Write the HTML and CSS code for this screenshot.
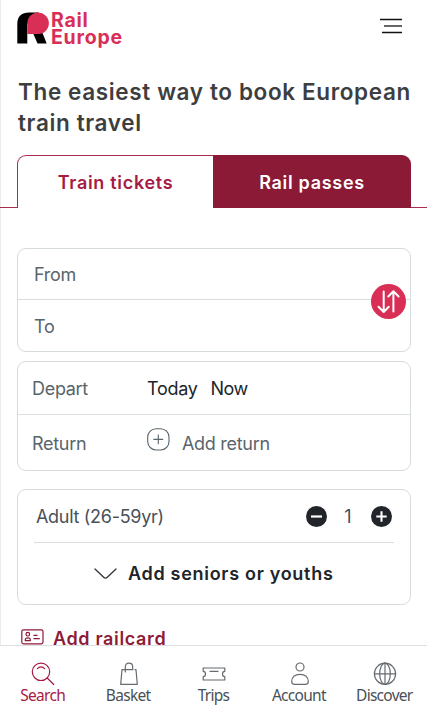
FILE: index.html
```html
<!DOCTYPE html>
<html lang="en">
<head>
<meta charset="utf-8">
<meta name="viewport" content="width=device-width, initial-scale=1">
<title>Rail Europe</title>
<link rel="stylesheet" href="styles.css">
</head>
<body>
<div class="app">
  <main class="page">
    <header class="header">
      <div class="brand">
        <svg width="33" height="32" viewBox="0 0 33 32"><path d="M.3 31.500V12C.3 4 5 .5 12 .5H22L10.300 12V31.500Z" fill="#000"/><path d="M16 21H25.500L29.700 31.500H20.500Z" fill="#000"/><path d="M10.300 22V11.500A10.800 10.800 0 1 1 21.300 22Z" fill="#d92e56"/></svg>
        <div class="brand-name"><span>Rail</span><span>Europe</span></div>
      </div>
      <svg class="menu" width="22" height="16" viewBox="0 0 22 16"><path d="M0 1.500H22M2 14.500H22" stroke="#111" stroke-width="1.300"/><path d="M4 8H22" stroke="#555" stroke-width="1.800"/></svg>
    </header>
    <h1 class="title">The easiest way to book European<br>train travel</h1>
    <div class="tabs">
      <div class="edge"></div>
      <div class="tab active"><span>Train tickets</span></div>
      <div class="tab passes"><span>Rail passes</span></div>
      <div class="edge"></div>
    </div>
    <section class="card stations">
      <div class="row from"><span>From</span></div>
      <div class="row to"><span>To</span></div>
      <button class="swap" aria-label="Swap stations"><svg width="35" height="35" viewBox="0 0 35 35" fill="none" stroke="#fff" stroke-width="2" stroke-linecap="round" stroke-linejoin="round"><path d="M12.700 7.500V27.500M7.500 22.700L12.700 28L17.800 22.700M22.400 27.500V7.500M17.300 12.500L22.400 7.300L27.600 12.500"/></svg></button>
    </section>
    <section class="card dates">
      <div class="row depart"><span class="label"><span>Depart</span></span><span class="today">Today</span><span class="now">Now</span></div>
      <div class="row return"><span class="label"><span>Return</span></span><svg class="plus" width="23" height="23" viewBox="0 0 23 23" fill="none" stroke="#59656c" stroke-width="1.100"><rect x=".7" y=".7" width="21.300" height="21.300" rx="8.500"/><path d="M11.300 6.500V16.300M6.400 11.400H16.200"/></svg><span class="add-return">Add return</span></div>
    </section>
    <section class="card people">
      <div class="adult">
        <span class="adult-label">Adult (26-59yr)</span>
        <svg width="21" height="21" viewBox="0 0 21 21"><circle cx="10.500" cy="10.500" r="10.500" fill="#212529"/><path d="M5 10.500H16" stroke="#fff" stroke-width="2.200"/></svg>
        <span class="count">1</span>
        <svg width="21" height="21" viewBox="0 0 21 21"><circle cx="10.500" cy="10.500" r="10.500" fill="#212529"/><path d="M5.300 10.500H15.700M10.500 5.300V15.700" stroke="#fff" stroke-width="2.100"/></svg>
      </div>
      <div class="more">
        <svg width="23" height="12" viewBox="0 0 23 12" fill="none" stroke="#30353a" stroke-width="1.300" stroke-linecap="round"><path d="M1 1L9.700 9.300Q11.500 11 13.300 9.300L22 1"/></svg>
        <span>Add seniors or youths</span>
      </div>
    </section>
    <div class="railcard">
      <svg width="23" height="16" viewBox="0 0 23 16" fill="none" stroke="#8d1a38" stroke-width="1.200"><rect x=".8" y=".8" width="21.200" height="14" rx="1.700"/><circle cx="6.800" cy="5.200" r="1.800"/><path d="M4.300 11.700V10.700Q4.300 8.800 6.800 8.800T9.300 10.700V11.700ZM12.500 6.300H16.500M12.500 9.700H18.800"/></svg>
      <span>Add railcard</span>
    </div>
  </main>
  <nav class="nav">
    <a class="item selected"><svg width="24" height="24" viewBox="0 0 24 24"><circle cx="10" cy="9.800" r="8.700"/><path d="M16.200 16L22.700 22.500M6.300 6.600Q10 3.200 13.700 6.600"/></svg><span>Search</span></a>
    <a class="item"><svg width="24" height="24" viewBox="0 0 24 24"><path d="M8.300 7.700H5L3.700 22.300H20.300L19 7.700H18M8.300 10V5Q8.300 1.200 12 1.200T15.700 5V7.700H8.300"/></svg><span>Basket</span></a>
    <a class="item"><svg width="24" height="24" viewBox="0 0 24 24"><path d="M1.200 6H22.800V9.300Q20.500 9.300 20.500 12T22.800 14.700V18H1.200V14.700Q3.500 14.700 3.500 12T1.200 9.300ZM8 9.300H16"/></svg><span>Trips</span></a>
    <a class="item"><svg width="24" height="24" viewBox="0 0 24 24"><circle cx="12" cy="5" r="4"/><path d="M6.500 22.300Q3.700 22.300 3.700 19.500C3.700 15 7 12.300 12 12.300S20.300 15 20.300 19.500Q20.300 22.300 17.500 22.300Z"/></svg><span>Account</span></a>
    <a class="item"><svg width="24" height="24" viewBox="0 0 24 24"><circle cx="12" cy="11.800" r="10.600"/><ellipse cx="12" cy="11.800" rx="5.300" ry="10.600"/><path d="M12 1.200V22.400M1.400 11.800H22.600"/></svg><span>Discover</span></a>
  </nav>
</div>
</body>
</html>
```
FILE: styles.css
```css
* { box-sizing: border-box; }
body { margin: 0; background: #fff; font-family: Inter, sans-serif; color: #212529; }
svg { display: block; flex: none; }
.app { height: 712px; display: flex; flex-direction: column; overflow: hidden; box-shadow: inset 1px 0 #ececec; }
.page { height: 645px; overflow: hidden; flex: none; }
.header { height: 76px; padding: 12px 24px 0 17px; display: flex; justify-content: space-between; align-items: flex-start; }
.brand { display: flex; align-items: flex-start; gap: 1px; }
.brand-name { display: flex; flex-direction: column; color: #d92e56; font: 700 19.500px/17px Inter, sans-serif; letter-spacing: .75px; }
.menu { margin: 6px 1px 0 0; }
.title { margin: 0; padding-left: 18px; font-size: 22.500px; line-height: 31px; font-weight: 600; color: #3d3e3f; white-space: nowrap; letter-spacing: .63px; }
.tabs { margin-top: 17px; height: 53px; display: flex; }
.edge { width: 17px; border-bottom: 1px solid #a72c4d; }
.edge:last-child { flex: 1; }
.tab { display: flex; align-items: center; justify-content: center; padding-top: 1px; font-size: 18px; font-weight: 600; letter-spacing: .7px; }
.active { width: 196px; border: 1px solid #a72c4d; border-width: 1px 0 0 1px; border-radius: 9px 0 0; color: #a61b43; }
.passes { width: 198px; background: #8a1a36; color: #fff; border-radius: 0 9px 0 0; }
.card { position: relative; margin: 0 16px 0 17px; border: 1px solid #d6dbdd; border-radius: 9px; }
.row { display: flex; align-items: center; color: #59656c; font-size: 18px; letter-spacing: -.3px; }
.stations { height: 104px; margin-top: 40px; }
.stations .row { height: 51px; padding-left: 16px; }
.stations .to { padding-top: 1px; }
.from { border-bottom: 1px solid #d8dddf; }
.swap { position: absolute; right: 4px; top: 35px; width: 35px; height: 35px; padding: 0; border: 0; border-radius: 50%; background: #d92e56; }
.dates { height: 110px; margin-top: 9px; }
.dates .row { height: 53px; padding: 1px 0 0 14px; }
.depart { border-bottom: 1px solid #dce0e2; }
.label { width: 115px; }
.today, .now { color: #212529; }
.now { margin-left: 13px; letter-spacing: -.5px; }
.dates .return { height: 55px; }
.plus { margin-top: -7px; }
.add-return { margin-left: 12px; }
.people { height: 116px; margin-top: 18px; padding: 0 16px; }
.adult { display: flex; align-items: center; height: 53px; border-bottom: 1px solid #d8dddf; padding: 0 2px; }
.adult-label { flex: 1; font-size: 18px; color: #495057; letter-spacing: -.3px; }
.count { width: 44px; padding-right: 2px; text-align: center; font-size: 18px; color: #495057; }
.more { height: 61px; display: flex; align-items: center; gap: 11px; padding-left: 60px; font-size: 18px; font-weight: 600; letter-spacing: .7px; white-space: nowrap; }
.railcard { height: 30px; margin: 18px 0 0 21px; display: flex; align-items: center; gap: 9px; color: #8d1a38; font-size: 18px; font-weight: 600; letter-spacing: .65px; }
.railcard svg { margin-top: -2px; }
.nav { height: 67px; flex: none; border-top: 1px solid #dedfe0; display: grid; grid-template-columns: repeat(5, 1fr); background: #fff; }
.item { display: flex; flex-direction: column; align-items: center; padding-top: 16px; color: #495057; font: 15.500px/19px "Noto Sans", sans-serif; letter-spacing: -.72px; }
.item svg { fill: none; stroke: #656b70; stroke-width: 1.200; stroke-linecap: round; stroke-linejoin: round; transform: translateX(1px); }
.selected { color: #a61b43; }
.selected svg { stroke: #a61b43; transform: none; }
```
